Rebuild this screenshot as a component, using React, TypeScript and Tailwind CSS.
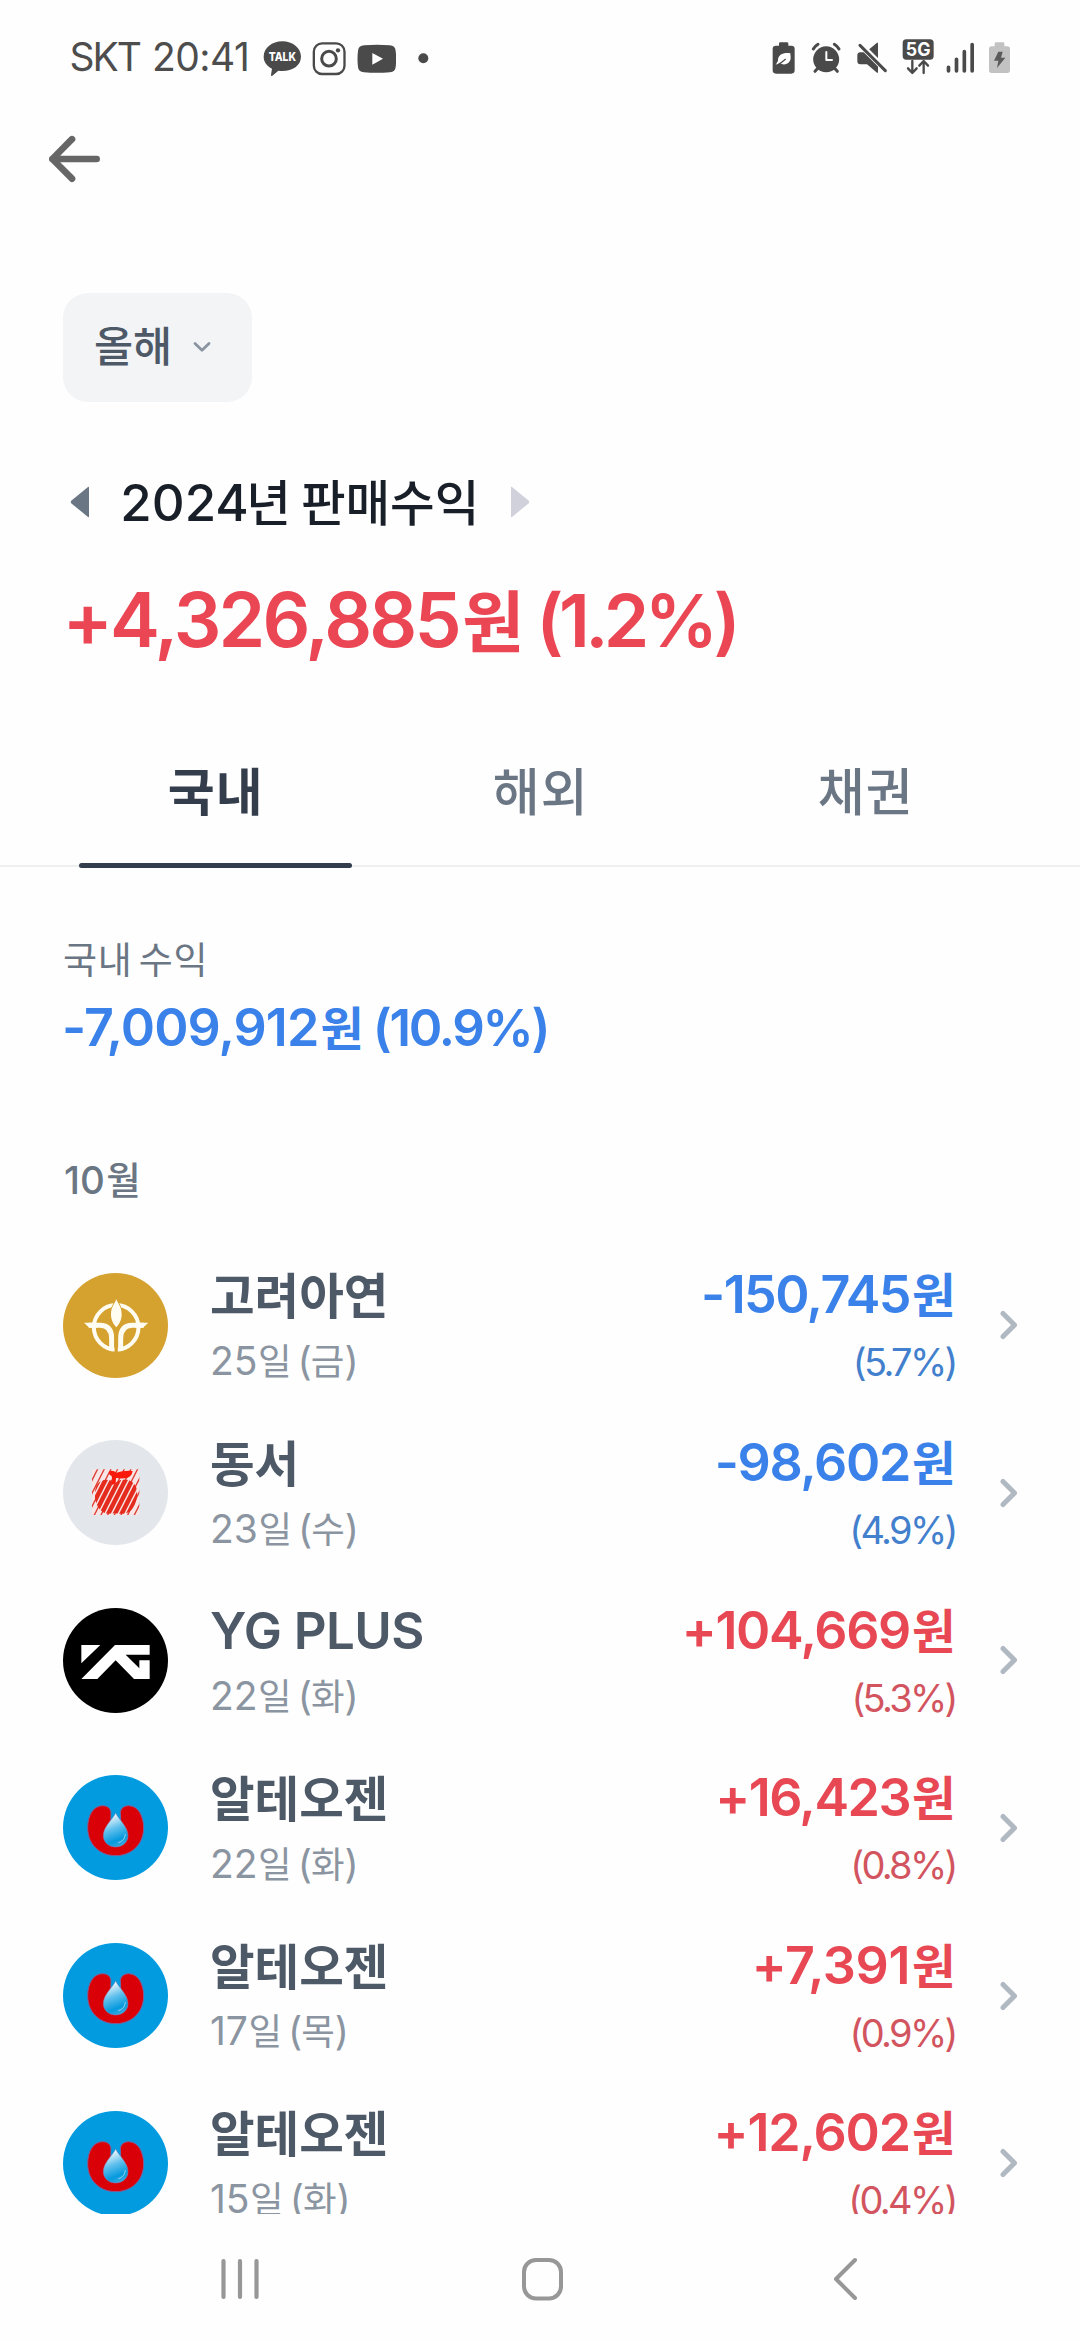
import type { ReactNode } from 'react';

/* ---------- status bar ---------- */

function StatusIcon({ x, w, className = '', children }: { x: number; w: number; className?: string; children: ReactNode }) {
  return (
    <svg viewBox={`${x} 50 ${w} 120`} width={w / 3} height={40} className={`shrink-0 ${className}`} fill="#4a4a4a">
      {children}
    </svg>
  );
}

function StatusBar() {
  return (
    <div className="flex h-[113.4px] shrink-0 items-center pr-[70px] pl-[69.5px]">
      <div className="flex items-baseline pt-[1.6px] text-[39px] leading-[50px] text-[#4d4d4d]">
        <span className="tracking-[-2px]">SKT</span>
        <span className="ml-[12px] tracking-[-0.5px]">20:41</span>
      </div>
      <StatusIcon x={669} w={116} className="ml-[13.5px]">
        <path d="M727 63c31 0 56 20 56 46s-25 43-56 43c-4 0-8 0-12-1l-18 15c-2 2-4 1-4-2l3-19c-15-8-25-20-25-36 0-26 25-46 56-46Z" />
        <text x="727" y="122" textAnchor="middle" textLength="82" lengthAdjust="spacingAndGlyphs" fontSize="36" fontWeight="800" fill="#fff">
          TALK
        </text>
      </StatusIcon>
      <StatusIcon x={817} w={103} className="ml-[11px]">
        <rect x="822.5" y="69" width="92" height="92" rx="25" fill="none" stroke="#4a4a4a" strokeWidth="7" />
        <circle cx="868" cy="115" r="22" fill="none" stroke="#4a4a4a" strokeWidth="9" />
        <circle cx="895" cy="90" r="6.5" />
      </StatusIcon>
      <StatusIcon x={950} w={119} className="ml-[10px]">
        <path d="M972 75q38-3 76 0 17 1 18 17 3 24 0 48-1 15-17 16-40 3-78 0-17-1-18-16-3-24 0-48 1-16 19-17Z" />
        <path d="M996 98v35l32-17.500Z" fill="#fff" />
      </StatusIcon>
      <StatusIcon x={1133} w={32} className="ml-[21.700px]">
        <circle cx="1149" cy="114" r="15" />
      </StatusIcon>

      <StatusIcon x={97} w={70} className="ml-auto">
        <path d="M122 66h20q4 0 4 4v6h9q10 0 10 10v64q0 10-10 10h-46q-10 0-10-10V86q0-10 10-10h9v-6q0-4 4-4Z" />
        <path d="M152 99c-20-3-38 4-37 22l-7 13 12-5c18 9 34-2 33-18Z" fill="#fff" />
        <path d="M108 136q12-4 30-20" fill="none" stroke="#4a4a4a" strokeWidth="3.500" />
      </StatusIcon>
      <StatusIcon x={214} w={91} className="ml-[15.700px]">
        <circle cx="259.500" cy="117" r="39" />
        <path d="M221 86q4-8 14-14M298 86q-4-8-14-14M235 143l-9 10M284 143l9 10" stroke="#4a4a4a" strokeWidth="9" strokeLinecap="round" fill="none" />
        <path d="M260 95v24h17" fill="none" stroke="#fff" strokeWidth="6" strokeLinecap="round" strokeLinejoin="round" />
      </StatusIcon>
      <StatusIcon x={350} w={92} className="ml-[15px]">
        <path d="M413 67v90h-3l-30-25h-20q-9 0-9-9v-18q0-9 9-9h16l34-29Z" />
        <path d="M356 69l84 84" stroke="#fff" strokeWidth="18" />
        <path d="M359 75l76 76" stroke="#4a4a4a" strokeWidth="9" strokeLinecap="round" />
      </StatusIcon>
      <StatusIcon x={486} w={97} className="ml-[14.700px]">
        <rect x="488" y="57" width="93" height="61" rx="11" />
        <text x="534.500" y="107" textAnchor="middle" textLength="74" lengthAdjust="spacingAndGlyphs" fontSize="55" fontWeight="700" fill="#fff">
          5G
        </text>
        <path d="M517 122v34M504 144l13 14 13-14M551 158v-34M538 136l13-14 13 14" fill="none" stroke="#4a4a4a" strokeWidth="7" strokeLinecap="round" strokeLinejoin="round" />
      </StatusIcon>
      <StatusIcon x={617} w={87} className="ml-[11.300px]">
        <path d="M624.500 141v11M648.500 117v35M672 94v58M695.500 73v79" stroke="#4a4a4a" strokeWidth="11" strokeLinecap="round" />
      </StatusIcon>
      <StatusIcon x={747} w={63} className="ml-[14.300px]">
        <path d="M768 66h21q4 0 4 4v8h9q8 0 8 8v64q0 8-8 8h-47q-8 0-8-8V86q0-8 8-8h9v-8q0-4 4-4Z" fill="#c2c2c2" />
        <path d="M775 94h13l-5 18h13l-25 31 4-22h-13Z" fill="#5a5a5a" />
      </StatusIcon>
    </div>
  );
}

/* ---------- company logos ---------- */

function GoldLogo() {
  return (
    <svg viewBox="69 69 315 315" className="size-full">
      <circle cx="226.500" cy="226.500" r="157.500" fill="#d5a12f" />
      <g fill="none" stroke="#fffdf2">
        <circle cx="228.500" cy="232" r="67" strokeWidth="12" />
        <path d="M146 226h34q35 0 35 40v36M311 226h-34q-35 0-35 40v36" strokeWidth="15" />
      </g>
      <path d="M132 218h40v15h-24ZM325 218h-40v15h24Z" fill="#fffdf2" />
      <path d="M228.500 233v74" stroke="#d5a12f" strokeWidth="10" />
      <path d="M229 147c3 12 16 22 16 46 0 17-7 30-16 39-9-9-16-22-16-39 0-24 13-34 16-46Z" fill="#fffdf2" stroke="#d5a12f" strokeWidth="5" paintOrder="stroke" />
    </svg>
  );
}

function AppleLogo() {
  const offsets = Array.from({ length: 12 }, (_, i) => 82 + i * 20);
  return (
    <svg viewBox="69 573 315 315" className="size-full">
      <defs>
        <clipPath id="apple-frame">
          <rect x="156" y="661" width="142" height="137" />
        </clipPath>
        <clipPath id="apple-body">
          <path d="M226 702c16-14 40-14 54 0 18 18 14 52-2 76-10 15-24 18-38 16-12-2-20-2-32 0-16 2-30-10-38-28-8-20-7-46 2-60 12-18 38-18 54-4Z" />
        </clipPath>
      </defs>
      <circle cx="226.500" cy="730.500" r="157.500" fill="#e3e7eb" />
      <g clipPath="url(#apple-frame)">
        <rect x="156" y="661" width="142" height="137" fill="#f6e6e6" />
        {offsets.map((x) => (
          <path key={x} d={`M${x} 800l72-142`} stroke="#de3a32" strokeWidth="4" />
        ))}
      </g>
      <g clipPath="url(#apple-body)">
        {offsets.map((x) => (
          <path key={x} d={`M${x} 800l72-142`} stroke="#e52b1d" strokeWidth="13.500" />
        ))}
      </g>
      <path d="M207 668q10-7 22 3 22-7 49-5-3 21-24 22-14 1-26-1l-1 16-11 5q2-14-1-27-10-4-8-13Z" fill="#fa1a0c" />
    </svg>
  );
}

function YgLogo() {
  return (
    <svg viewBox="69 84 315 315" className="size-full">
      <circle cx="226.500" cy="241.500" r="157.500" fill="#000" />
      <path d="M124 195h57l-57 55ZM124 297l101-102h104v29h-72l41 41v-24h31v56h-47l-55-56-55 56Z" fill="#fff" />
    </svg>
  );
}

function DropLogo() {
  return (
    <svg viewBox="69 588 315 315" className="size-full">
      <defs>
        <linearGradient id="drop" x1="0.300" y1="0" x2="0.600" y2="1">
          <stop offset="0.080" stopColor="#f2fafd" />
          <stop offset="0.450" stopColor="#62c0ec" />
          <stop offset="0.800" stopColor="#069ade" />
          <stop offset="1" stopColor="#35a9e0" />
        </linearGradient>
      </defs>
      <circle cx="226.500" cy="745.500" r="157.500" fill="#029bdf" />
      <path
        d="M188 680c16 0 25 9 25 24l-1 34h31l-2-34c0-15 9-24 25-24 30 0 45 34 45 66 0 52-38 84-84 84s-84-32-84-84c0-34 15-66 45-66Z"
        fill="#d90008"
        stroke="#80609a"
        strokeWidth="3"
      />
      <path d="M214 704l13-8 14 8v20h-27Z" fill="#029bdf" />
      <path d="M227 702c7 18 37 40 37 68 0 20-17 34-37 34s-37-14-37-34c0-28 30-50 37-68Z" fill="url(#drop)" stroke="#8c7fae" strokeWidth="1.500" />
      <path d="M236 791q19-6 20-25" fill="none" stroke="#8ed3f2" strokeWidth="3" strokeLinecap="round" />
    </svg>
  );
}

/* ---------- rows ---------- */

type Row = {
  logo: () => ReactNode;
  name: string;
  nameClass: string;
  day: string;
  weekday: string;
  amount: string;
  tracking: string;
  rate: string;
  up: boolean;
};

const hangulName = 'text-[48.5px] font-bold pt-[2px] -mb-[2px]';
const rows: Row[] = [
  { logo: GoldLogo, name: '고려아연', nameClass: hangulName, day: '25', weekday: '금', amount: '-150,745', tracking: 'tracking-[-1.570px]', rate: '(5.7%)', up: false },
  { logo: AppleLogo, name: '동서', nameClass: hangulName, day: '23', weekday: '수', amount: '-98,602', tracking: 'tracking-[-1.350px]', rate: '(4.9%)', up: false },
  { logo: YgLogo, name: 'YG PLUS', nameClass: 'text-[51px] tracking-[-0.550px] font-semibold', day: '22', weekday: '화', amount: '+104,669', tracking: 'tracking-[-1.360px]', rate: '(5.3%)', up: true },
  { logo: DropLogo, name: '알테오젠', nameClass: hangulName, day: '22', weekday: '화', amount: '+16,423', tracking: 'tracking-[-1.500px]', rate: '(0.8%)', up: true },
  { logo: DropLogo, name: '알테오젠', nameClass: hangulName, day: '17', weekday: '목', amount: '+7,391', tracking: 'tracking-[-0.400px]', rate: '(0.9%)', up: true },
  { logo: DropLogo, name: '알테오젠', nameClass: hangulName, day: '15', weekday: '화', amount: '+12,602', tracking: 'tracking-[-1.150px]', rate: '(0.4%)', up: true },
];

function TradeRow({ row }: { row: Row }) {
  const Logo = row.logo;
  return (
    <li className="flex h-[167.6px] shrink-0 items-center pr-[60.8px] pl-[63px]">
      <div className="size-[105px] shrink-0">
        <Logo />
      </div>
      <div className="ml-[42px] flex flex-col gap-[10.5px] pt-[2px]">
        <span className={`leading-[60px] text-[#4e5968] ${row.nameClass}`}>{row.name}</span>
        <div className="flex items-baseline text-[39px] leading-[50px] text-[#8b95a1]">
          <span>{row.day}</span>
          <span className="ml-[0.5px] text-[36.5px]">일</span>
          <span className="ml-[6px]">(</span>
          <span className="-ml-px text-[36.5px]">{row.weekday}</span>
          <span>)</span>
        </div>
      </div>
      <div className="ml-auto flex flex-col items-end gap-[11px] pt-[2.5px]">
        <div className={`flex items-baseline text-[52px] leading-[60px] font-semibold ${row.up ? 'text-[#e74854]' : 'text-[#3a82e9]'}`}>
          <span className={row.tracking}>{row.amount}</span>
          <span className="ml-[2px] text-[47.5px]">원</span>
        </div>
        <span className={`text-[38px] leading-[50px] tracking-[-2.7px] ${row.up ? 'text-[#d2545e]' : 'text-[#427fcd]'}`}>{row.rate}</span>
      </div>
      <svg viewBox="0 0 20 32" className="ml-[43.500px] h-[32px] w-[20px] shrink-0" fill="none" stroke="#b0b8c1" strokeWidth="5" strokeLinecap="round" strokeLinejoin="round">
        <path d="M4 4.500L15.500 16 4 27.500" />
      </svg>
    </li>
  );
}

function Tab({ label, active = false }: { label: string; active?: boolean }) {
  return (
    <div className="flex w-[325px] flex-col items-center justify-between">
      <span className={`pt-px pl-[1.5px] text-[51px] leading-[60px] tracking-[1.2px] ${active ? 'font-bold text-[#333d4b]' : 'font-medium text-[#6b7684]'}`}>{label}</span>
      {active && <div className="relative -mb-[3.5px] h-[5px] w-[273px] rounded-full bg-[#333d4b]" />}
    </div>
  );
}

export default function App() {
  return (
    <div className="flex h-[2340px] w-[1080px] flex-col overflow-hidden bg-[#fefefe] font-['Inter','Noto_Sans_CJK_KR',sans-serif] whitespace-nowrap">
      <main className="flex h-[2213.7px] shrink-0 flex-col overflow-hidden">
        <StatusBar />

        <header className="flex h-[91.800px] shrink-0 items-center pl-[49.3px]">
          <svg viewBox="28 340 156 156" className="size-[52px]" fill="none" stroke="#666" strokeWidth="20" strokeLinecap="round" strokeLinejoin="round">
            <path d="M171 418H38M97 358.500L38 418l59 59" />
          </svg>
        </header>

        <button className="mt-[87.800px] ml-[63px] flex h-[109px] w-[189px] shrink-0 items-center rounded-[25px] bg-[#f2f4f6] pl-[31px]">
          <span className="text-[42.5px] leading-[60px] font-medium text-[#4e5968]">올해</span>
          <svg viewBox="0 0 20 14" className="ml-[20px] h-[14px] w-[20px]" fill="none" stroke="#8b95a1" strokeWidth="2.800" strokeLinecap="round" strokeLinejoin="round">
            <path d="M3 3.500l7 6.800 7-6.800" />
          </svg>
        </button>

        <div className="mt-[70.500px] flex h-[60px] shrink-0 items-center pl-[70px]">
          <svg viewBox="0 0 20 32" className="h-[32px] w-[20px]" fill="#6b7684">
            <path d="M19 1.500v29q0 1-1 .5L1.500 17.500q-1.500-1.500 0-3L18 1q1-.5 1 .5Z" />
          </svg>
          <div className="ml-[30.300px] flex items-baseline pt-[2px] text-[51px] leading-[60px] font-medium text-[#191f28]">
            <span>2024</span>
            <span className="-ml-[2.5px] text-[48.5px]">년</span>
            <span className="ml-[10px] text-[48.5px]">판매수익</span>
          </div>
          <svg viewBox="0 0 20 32" className="ml-[31px] h-[32px] w-[20px]" fill="#d1d1dc">
            <path d="M1 1.500v29q0 1 1 .5l16.500-13.500q1.500-1.500 0-3L2 1q-1-.5-1 .5Z" />
          </svg>
        </div>

        <div className="mt-[42.600px] flex h-[90px] shrink-0 items-baseline pl-[62.5px] text-[75px] leading-[90px] font-semibold text-[#ea4653]">
          <span className="tracking-[-2.9px]">+4,326,885</span>
          <span className="ml-[3.5px] text-[67.5px]">원</span>
          <span className="ml-[12px] text-[73px] tracking-[-4.6px]">(1.2%)</span>
        </div>

        <nav className="mt-[96.500px] flex h-[105px] shrink-0 justify-center border-b-2 border-[#eeeff0]">
          <Tab label="국내" active />
          <Tab label="해외" />
          <Tab label="채권" />
        </nav>

        <div className="mt-[69.600px] flex h-[50px] shrink-0 items-baseline pl-[63px] text-[37px] leading-[50px] tracking-[0.8px] text-[#6b7684]">
          <span>국내</span>
          <span className="ml-[6px]">수익</span>
        </div>
        <div className="mt-[12px] flex h-[60px] shrink-0 items-baseline pl-[62.1px] text-[52px] leading-[60px] font-semibold text-[#3a82e9]">
          <span className="tracking-[-0.92px]">-7,009,912</span>
          <span className="ml-[2px] text-[47px]">원</span>
          <span className="ml-[9px] text-[51px] tracking-[-2.25px]">(10.9%)</span>
        </div>

        <div className="mt-[96.500px] flex h-[50px] shrink-0 items-baseline pl-[64px] text-[38.5px] leading-[50px] font-medium text-[#6b7684]">
          <span>10</span>
          <span className="ml-[1.5px] text-[37.5px]">월</span>
        </div>

        <ul className="mt-[36.700px] flex flex-col">
          {rows.map((row, i) => (
            <TradeRow key={i} row={row} />
          ))}
        </ul>
      </main>

      <footer className="flex h-[130px] shrink-0 items-center pl-[220px]">
        <svg viewBox="0 0 40 44" width="40" height="44" stroke="#979797" strokeWidth="4.200" strokeLinecap="round">
          <path d="M3.500 4v36M20 4v36M36.500 4v36" />
        </svg>
        <svg viewBox="0 0 44 44" width="44" height="44" className="ml-[260px]" fill="none" stroke="#979797" strokeWidth="4">
          <rect x="4" y="3" width="37" height="38.500" rx="12" />
        </svg>
        <svg viewBox="0 0 28 44" width="28" height="44" className="ml-[268px]" fill="none" stroke="#979797" strokeWidth="4" strokeLinecap="round" strokeLinejoin="round">
          <path d="M23 3L4 22l19 19" />
        </svg>
      </footer>
    </div>
  );
}
